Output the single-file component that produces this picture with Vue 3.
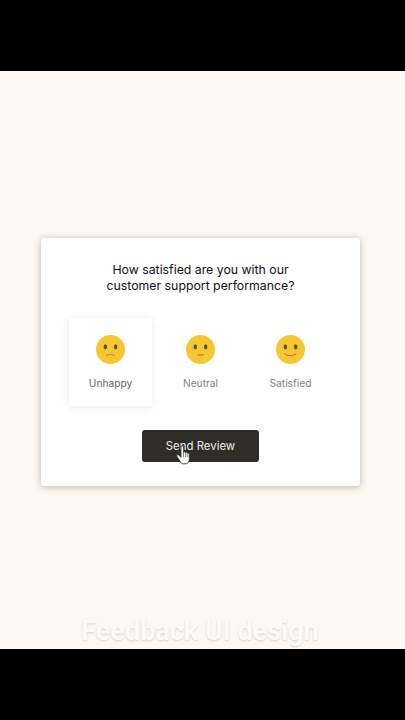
<template>
  <div class="screen">
    <div class="letterbox"></div>

    <div class="stage">
      <div class="card">
        <h1 class="question">
          How satisfied are you with our<br />
          customer support performance?
        </h1>

        <div class="ratings">
          <div
            v-for="r in ratings"
            :key="r.label"
            class="rating"
            :class="{ active: r.active }"
          >
            <svg class="face" viewBox="0 0 28 28" width="29" height="29">
              <circle cx="14" cy="14" r="14" fill="#f5c833" />
              <ellipse cx="9" cy="11.4" rx="1.7" ry="2.5" fill="#5c5430" />
              <ellipse cx="19" cy="11.4" rx="1.7" ry="2.5" fill="#5c5430" />
              <path :d="r.mouth" fill="none" stroke="#cf6f1e" stroke-width="1.1" stroke-linecap="round" />
            </svg>
            <span class="label">{{ r.label }}</span>
          </div>
        </div>

        <div class="actions">
          <button class="send">Send Review</button>
          <svg class="cursor" viewBox="0 0 15 20" width="15" height="20">
            <path
              d="M5 2c0-1.7 2.6-1.7 2.6 0v5.2c.9-.6 2-.4 2.2.4.9-.5 1.9-.2 2 .6.7-.3 1.6.1 1.6 1v4.3c0 2.6-1.2 5.3-3.2 5.3H7c-1.3 0-2-.8-2.8-2L.9 11.2c-.6-1.1.7-2 1.6-1.2L5 12.3V2z"
              fill="#fff"
              stroke="#2b2a26"
              stroke-width="0.8"
              stroke-linejoin="round"
            />
            <path d="M7.6 7.4v4.4M9.8 7.8v4M11.8 8.4v3.4" fill="none" stroke="#2b2a26" stroke-width="0.6" stroke-linecap="round" />
          </svg>
        </div>
      </div>

      <div class="caption">Feedback UI design</div>
    </div>

    <div class="letterbox"></div>
  </div>
</template>

<script setup>
const ratings = [
  { label: "Unhappy", active: true, mouth: "M10.4 20c1.8-1.9 5.4-1.9 7.2 0" },
  { label: "Neutral", active: false, mouth: "M11.4 19.2h5.2" },
  { label: "Satisfied", active: false, mouth: "M8.6 18.2c2.6 2.4 8.2 2.4 10.8 0" },
]
</script>

<style>
html,
body {
  margin: 0;
  background: #000;
}
</style>

<style scoped>
.screen {
  width: 405px;
  height: 720px;
  display: flex;
  flex-direction: column;
  overflow: hidden;
  font-family: Inter, "Open Sans", sans-serif;
}

.letterbox {
  height: 71px;
  background: #000;
  flex: none;
}

.stage {
  flex: 1;
  position: relative;
  background: #fcf9f2;
  padding: 167px 45px 0 41px;
}

.card {
  height: 248px;
  box-sizing: border-box;
  padding-top: 24px;
  background: #fff;
  border-radius: 3px;
  box-shadow: 0 1px 7px rgba(0, 0, 0, 0.28);
}

.question {
  margin: 0;
  font-size: 12.3px;
  font-weight: 400;
  line-height: 16px;
  text-align: center;
  color: #111;
}

.ratings {
  display: flex;
  justify-content: space-between;
  margin-top: 24px;
  padding: 0 28px;
}

.rating {
  width: 83px;
  height: 88px;
  box-sizing: border-box;
  padding-top: 17px;
  display: flex;
  flex-direction: column;
  align-items: center;
}

.rating.active {
  box-shadow: 0 1px 8px rgba(0, 0, 0, 0.09);
}

.face {
  display: block;
}

.label {
  margin-top: 12px;
  font-size: 10.2px;
  line-height: 14px;
  color: #7a8288;
}

.active .label {
  color: #5d6a66;
}

.actions {
  position: relative;
  display: flex;
  justify-content: center;
  margin-top: 24px;
}

.send {
  width: 117px;
  height: 32px;
  padding: 0;
  border: none;
  border-radius: 3px;
  background: #2f2d28;
  color: #eeeae4;
  font-family: inherit;
  font-size: 11.4px;
  font-weight: 400;
}

.cursor {
  position: absolute;
  left: 135px;
  top: 15px;
}

.caption {
  position: absolute;
  left: 0;
  right: 5px;
  top: 546px;
  text-align: center;
  font-family: Roboto, sans-serif;
  font-size: 27px;
  font-weight: 700;
  line-height: 28px;
  color: #fdfbf6;
  text-shadow: 0 1px 2px rgba(0, 0, 0, 0.16);
}
</style>
